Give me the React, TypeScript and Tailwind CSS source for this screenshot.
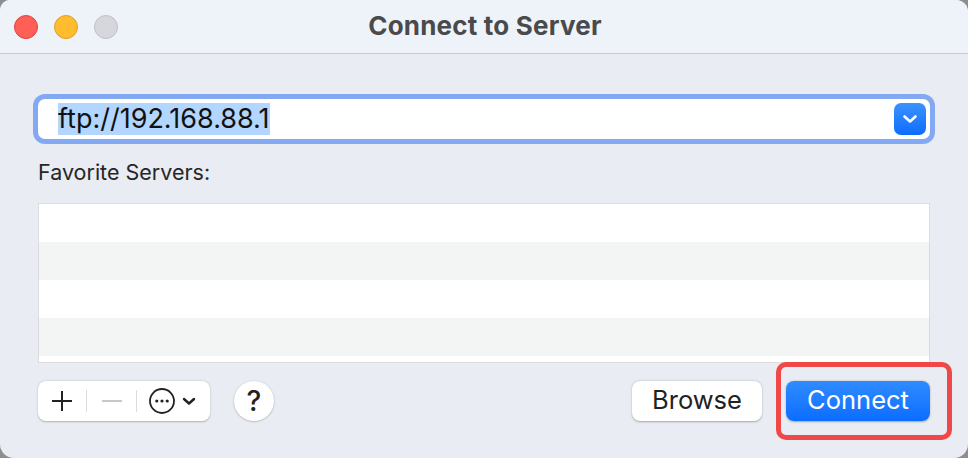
import React from "react";

const font = { fontFamily: 'Inter, "Noto Sans", "Liberation Sans", sans-serif' };

function TrafficLights() {
  return (
    <div className="flex items-center gap-[16px] pl-[14px]">
      <div className="w-[24px] h-[24px] rounded-full bg-[#fe5f57] border border-[#e0443e]" />
      <div className="w-[24px] h-[24px] rounded-full bg-[#febc2e] border border-[#dea123]" />
      <div className="w-[24px] h-[24px] rounded-full bg-[#d5d7dd] border border-[#bfc1c7]" />
    </div>
  );
}

export default function App() {
  return (
    <div className="w-[968px] h-[458px] bg-[#8e8e8e] overflow-hidden" style={font}>
      <div className="relative w-full h-full bg-[#e9ecf2] rounded-tl-[10px] rounded-tr-[12px] rounded-bl-[14px] rounded-br-[14px] overflow-hidden flex flex-col">
        {/* Title bar */}
        <div className="relative h-[54px] shrink-0 bg-[#eef2f9] border-b border-[#c9cbd0] flex items-center">
          <TrafficLights />
          <div className="absolute inset-0 flex items-center justify-center pointer-events-none pb-[3px]">
            <span className="text-[26px] font-bold text-[#4a4a4c] tracking-[0.2px] pl-[2px]">Connect to Server</span>
          </div>
        </div>

        {/* Body */}
        <div className="flex flex-col px-[38px] pt-[40px]">
          {/* Input with focus ring */}
          <div className="mx-[-5px] rounded-[12px] bg-[#83a9f2] p-[5px]">
            <div className="h-[40px] bg-white rounded-[7px] flex items-center pl-[20px] pr-[4px]">
              <span className="text-[27px] leading-[32px] text-[#111] bg-[#b3d6fe] tracking-[0px]">ftp://192.168.88.1</span>
              <div className="flex-1" />
              <div className="w-[32px] h-[32px] rounded-[7px] bg-gradient-to-b from-[#3b92ff] to-[#0a6cff] flex items-center justify-center">
                <svg width="16" height="10" viewBox="0 0 16 10" fill="none">
                  <path d="M2.5 2.5 L8 7.5 L13.5 2.5" stroke="white" strokeWidth="2.6" strokeLinecap="round" strokeLinejoin="round" />
                </svg>
              </div>
            </div>
          </div>

          <div className="mt-[15px] text-[21.5px] leading-[26px] text-[#262626]">Favorite Servers:</div>

          {/* List */}
          <div className="mt-[18px] h-[160px] border border-[#dcdcdc] bg-white flex flex-col overflow-hidden">
            <div className="h-[38px] shrink-0 bg-white" />
            <div className="h-[38px] shrink-0 bg-[#f3f4f4]" />
            <div className="h-[38px] shrink-0 bg-white" />
            <div className="h-[38px] shrink-0 bg-[#f3f4f4]" />
            <div className="flex-1 bg-white" />
          </div>

          {/* Bottom toolbar */}
          <div className="mt-[18px] flex items-center">
            <div className="w-[172px] h-[40px] bg-white rounded-[8px] shadow-[0_0.5px_2px_rgba(0,0,0,0.25)] flex items-center">
              <div className="w-[48px] flex items-center justify-center">
                <svg width="24" height="24" viewBox="0 0 24 24">
                  <path d="M12 2 V22 M2 12 H22" stroke="#222" strokeWidth="2" />
                </svg>
              </div>
              <div className="w-[1px] h-[22px] bg-[#dcdcdc]" />
              <div className="w-[49px] flex items-center justify-center">
                <svg width="22" height="4" viewBox="0 0 22 4">
                  <path d="M1 2 H21" stroke="#c8c8c8" strokeWidth="2" />
                </svg>
              </div>
              <div className="w-[1px] h-[22px] bg-[#dcdcdc]" />
              <div className="flex items-center pl-[11px] gap-[6px]">
                <svg width="28" height="28" viewBox="0 0 28 28">
                  <circle cx="14" cy="14" r="12" stroke="#222" strokeWidth="1.8" fill="none" />
                  <circle cx="8.8" cy="14" r="1.6" fill="#222" />
                  <circle cx="14" cy="14" r="1.6" fill="#222" />
                  <circle cx="19.2" cy="14" r="1.6" fill="#222" />
                </svg>
                <svg width="14" height="10" viewBox="0 0 14 10">
                  <path d="M2 3 L7 7.5 L12 3" stroke="#222" strokeWidth="2.4" fill="none" strokeLinecap="round" strokeLinejoin="round" />
                </svg>
              </div>
            </div>

            <div className="ml-[24px] w-[40px] h-[40px] rounded-full bg-white shadow-[0_0.5px_2px_rgba(0,0,0,0.3)] flex items-center justify-center">
              <span className="text-[28px] font-medium text-[#222] leading-none">?</span>
            </div>

            <div className="flex-1" />

            <div className="w-[130px] h-[40px] bg-white rounded-[8px] shadow-[0_0.5px_2px_rgba(0,0,0,0.3)] flex items-center justify-center pb-[2px]">
              <span className="text-[25.5px] text-[#222]">Browse</span>
            </div>

            <div className="ml-[24px] w-[144px] h-[40px] rounded-[8px] bg-gradient-to-b from-[#2f8bff] to-[#0a6dff] shadow-[0_0.5px_2px_rgba(0,0,0,0.3)] flex items-center justify-center pb-[2px]">
              <span className="text-[25.5px] text-white">Connect</span>
            </div>
          </div>
        </div>

        {/* Annotation highlight */}
        <div className="absolute left-[776px] top-[362px] w-[176px] h-[78px] border-[5px] border-[#f04848] rounded-[10px]" />
      </div>
    </div>
  );
}
